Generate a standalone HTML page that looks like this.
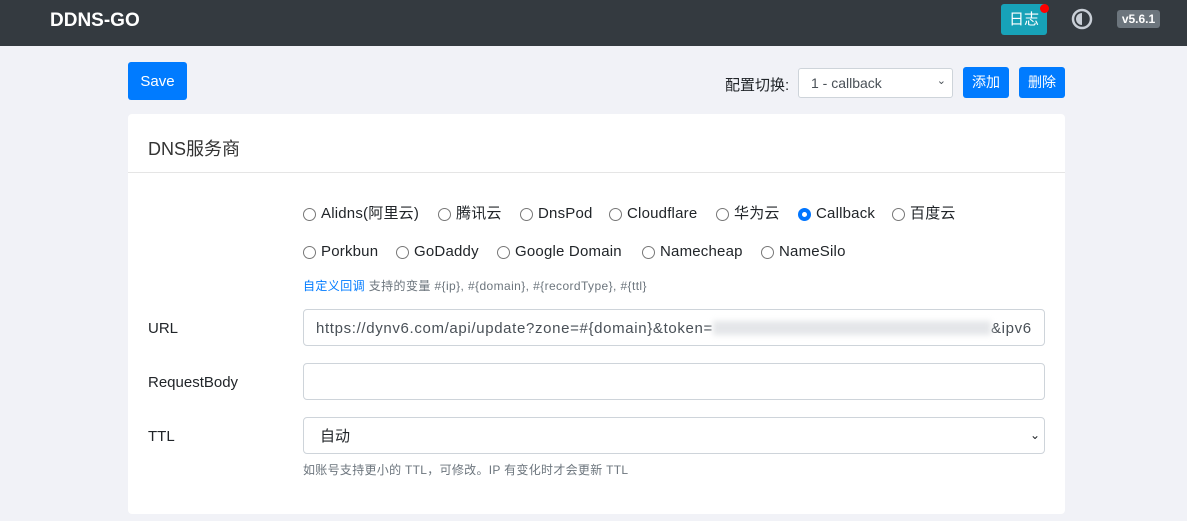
<!DOCTYPE html>
<html><head><meta charset="utf-8"><style>
*{box-sizing:border-box;margin:0;padding:0}
body{width:1187px;height:521px;overflow:hidden;background:#f1f2f7;font-family:"Liberation Sans","Noto Sans CJK SC",sans-serif;color:#212529;position:relative}
.hdr{position:absolute;left:0;top:0;width:1187px;height:46px;background:#343a40}
.logo{position:absolute;left:50px;top:10px;color:#fff;font-weight:bold;font-size:19px}
.log{position:absolute;left:1001px;top:4px;width:46px;height:31px;background:#17a2b8;border-radius:3px;color:#fff;font-size:15px;text-align:center;line-height:31px}
.dot{position:absolute;right:-2px;top:0;width:9px;height:9px;background:#f00;border-radius:50%}
.ver{position:absolute;left:1117px;top:10px;width:43px;height:18px;background:#6c757d;border-radius:3px;color:#fff;font-size:12px;font-weight:bold;text-align:center;line-height:18px}
.btn{position:absolute;background:#007bff;color:#fff;border-radius:3px;text-align:center;font-size:14px}
.abs{position:absolute}
.card{position:absolute;left:128px;top:114px;width:937px;height:400px;background:#fff;border-radius:4px}
.ch{height:59px;border-bottom:1px solid #e5e5e5;font-size:18px;padding:21px 0 0 20px;color:#333}
.r{position:absolute;font-size:15px;color:#212529;white-space:nowrap;display:flex;align-items:center;height:20px;line-height:20px;letter-spacing:0.2px}
.r span{display:inline-block;width:13px;height:13px;border:1px solid #777;border-radius:50%;margin-right:5px;flex:none}
.r span.on{border:4px solid #0075ff}
.inp{position:absolute;left:303px;width:742px;height:37px;border:1px solid #ced4da;border-radius:4px;font-size:15px;padding:10px 12px;color:#495057;white-space:nowrap;overflow:hidden;line-height:18px}
.lbl{position:absolute;left:148px;font-size:15px}
</style></head><body>
<div class="hdr"><div class="logo">DDNS-GO</div>
<div class="log">日志<div class="dot"></div></div>
<svg class="abs" style="left:1071px;top:8px" width="22" height="22" viewBox="0 0 22 22"><circle cx="11" cy="11" r="9" fill="none" stroke="#c8ced6" stroke-width="2.5"/><path d="M11 5a6 6 0 0 0 0 12z" fill="#c8ced6"/></svg>
<div class="ver">v5.6.1</div></div>
<div class="btn" style="left:128px;top:62px;width:59px;height:38px;line-height:40px;font-size:15px">Save</div>
<div class="abs" style="left:725px;top:74px;font-size:15px">配置切换:</div>
<div class="abs" style="left:798px;top:68px;width:155px;height:30px;background:#fff;border:1px solid #ced4da;border-radius:3px;font-size:14px;padding:6px 12px;color:#495057">1 - callback<span style="position:absolute;right:6px;top:5px;font-size:11px">&#8964;</span></div>
<div class="btn" style="left:963px;top:67px;width:46px;height:31px;line-height:31px">添加</div>
<div class="btn" style="left:1019px;top:67px;width:46px;height:31px;line-height:31px">删除</div>
<div class="card"><div class="ch">DNS服务商</div></div>
<div class="r" style="left:303px;top:204px"><span></span>Alidns(阿里云)</div>
<div class="r" style="left:438px;top:204px"><span></span>腾讯云</div>
<div class="r" style="left:520px;top:204px"><span></span>DnsPod</div>
<div class="r" style="left:609px;top:204px"><span></span>Cloudflare</div>
<div class="r" style="left:716px;top:204px"><span></span>华为云</div>
<div class="r" style="left:798px;top:204px"><span class="on"></span>Callback</div>
<div class="r" style="left:892px;top:204px"><span></span>百度云</div>
<div class="r" style="left:303px;top:242px"><span></span>Porkbun</div>
<div class="r" style="left:396px;top:242px"><span></span>GoDaddy</div>
<div class="r" style="left:497px;top:242px"><span></span>Google Domain</div>
<div class="r" style="left:642px;top:242px"><span></span>Namecheap</div>
<div class="r" style="left:761px;top:242px"><span></span>NameSilo</div>
<div class="abs" style="left:303px;top:277px;font-size:12px;color:#6c757d;letter-spacing:0.4px"><span style="color:#007bff">自定义回调</span> 支持的变量 #{ip}, #{domain}, #{recordType}, #{ttl}</div>
<div class="lbl" style="top:320px">URL</div>
<div class="inp" style="top:309px;letter-spacing:0.65px">https://dynv6.com/api/update?zone=#{domain}&amp;token=<span style="display:inline-block;width:278px;height:14px;background:#e4e6e9;filter:blur(3px);vertical-align:-2px"></span>&amp;ipv6</div>
<div class="lbl" style="top:374px">RequestBody</div>
<div class="inp" style="top:363px"></div>
<div class="lbl" style="top:428px">TTL</div>
<div class="inp" style="top:417px;padding-left:16px;color:#212529">自动<span style="position:absolute;right:4px;top:8px;font-size:12px">&#8964;</span></div>
<div class="abs" style="left:303px;top:461px;font-size:12px;color:#6c757d;letter-spacing:0.3px">如账号支持更小的 TTL，可修改。IP 有变化时才会更新 TTL</div>
</body></html>
